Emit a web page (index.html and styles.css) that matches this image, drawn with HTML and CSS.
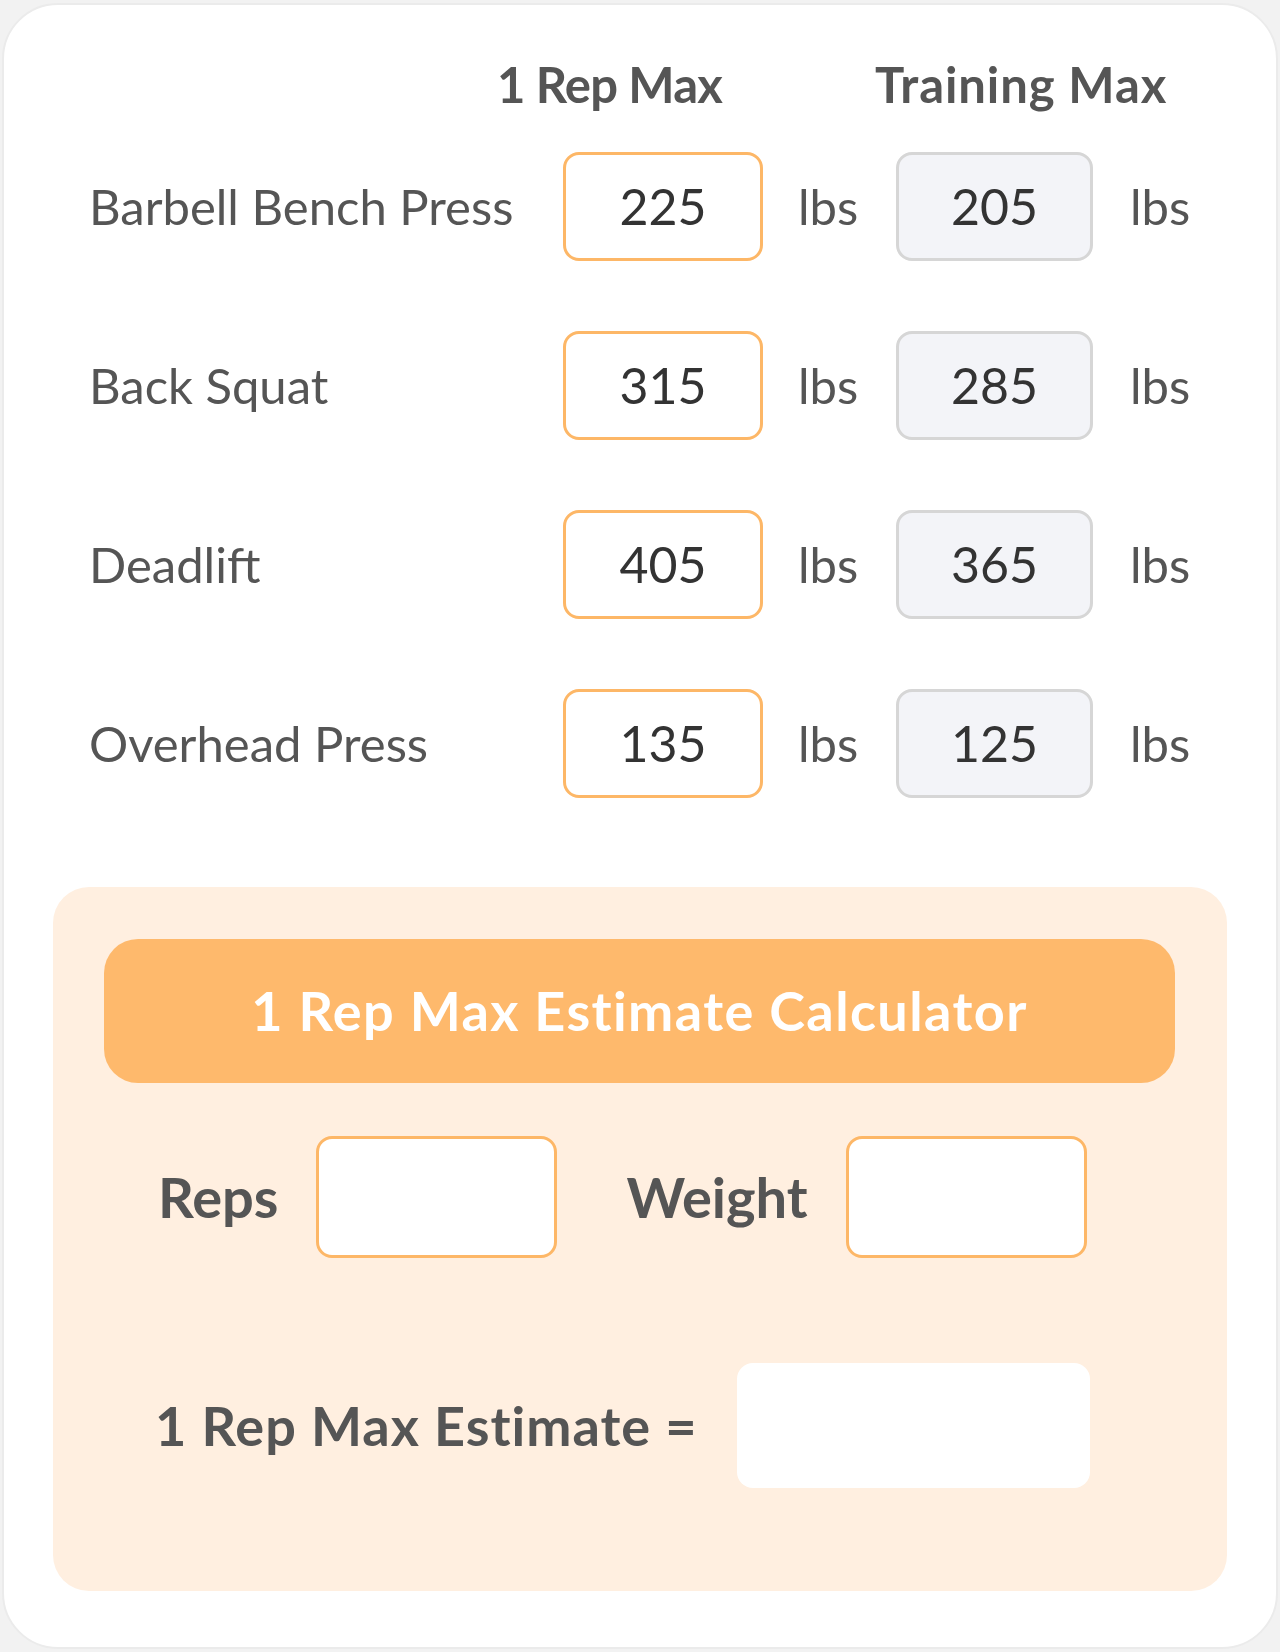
FILE: index.html
```html
<!DOCTYPE html>
<html lang="en">
<head>
    <meta charset="UTF-8">
    <meta name="viewport" content="width=device-width, initial-scale=1.0">
    <title>Training Max Calculator</title>
    <link rel="stylesheet" href="styles.css">
</head>
<body>

<div class="card">
    <div class="headings">
        <span class="heading-max">1 Rep Max</span>
        <span class="heading-training">Training Max</span>
    </div>

    <div class="lift-table">
        <div class="lift-name">Barbell Bench Press</div>
        <input class="max-input" type="text" value="225">
        <div class="unit">lbs</div>
        <input class="training-input" type="text" value="205" readonly>
        <div class="unit unit-last">lbs</div>

        <div class="lift-name">Back Squat</div>
        <input class="max-input" type="text" value="315">
        <div class="unit">lbs</div>
        <input class="training-input" type="text" value="285" readonly>
        <div class="unit unit-last">lbs</div>

        <div class="lift-name">Deadlift</div>
        <input class="max-input" type="text" value="405">
        <div class="unit">lbs</div>
        <input class="training-input" type="text" value="365" readonly>
        <div class="unit unit-last">lbs</div>

        <div class="lift-name">Overhead Press</div>
        <input class="max-input" type="text" value="135">
        <div class="unit">lbs</div>
        <input class="training-input" type="text" value="125" readonly>
        <div class="unit unit-last">lbs</div>
    </div>

    <div class="estimate-panel">
        <button class="calc-button">1 Rep Max Estimate Calculator</button>

        <div class="calc-row">
            <label class="calc-label" for="reps">Reps</label>
            <input class="calc-input" id="reps" type="text">
            <label class="calc-label weight-label" for="weight">Weight</label>
            <input class="calc-input" id="weight" type="text">
        </div>

        <div class="result-row">
            <span class="result-label">1 Rep Max Estimate =</span>
            <div class="result-box"></div>
        </div>
    </div>
</div>

</body>
</html>
```

FILE: styles.css
```css
body {
    margin: 0;
    background-color: #f2f2f2;
    font-family: Lato, "Liberation Sans", sans-serif;
    color: #555555;
}
.card {
    box-sizing: border-box;
    width: 1276px;
    height: 1646px;
    margin: 3px 2px;
    padding-top: 50px;
    background-color: #ffffff;
    border: 2px solid #ebebeb;
    border-radius: 56px;
}

/* column headings */
.headings {
    display: flex;
    padding-left: 493px;
    margin-bottom: 38px;
    font-size: 49px;
    font-weight: 700;
    line-height: 1.2;
}
.heading-max {
    width: 378px;
    letter-spacing: -0.8px;
}
.heading-training {
    letter-spacing: 0.9px;
}

/* lifts table */
.lift-table {
    display: grid;
    grid-template-columns: 474px 200px 133px 197px auto;
    align-items: center;
    row-gap: 70px;
    padding-left: 85px;
    font-size: 49px;
    line-height: 1.2;
}
.max-input,
.training-input {
    box-sizing: border-box;
    height: 109px;
    margin: 0;
    padding: 0;
    border-radius: 16px;
    font-family: Lato, "Liberation Sans", sans-serif;
    font-size: 50px;
    color: #333333;
    text-align: center;
    outline: none;
}
.max-input {
    width: 200px;
    background-color: #ffffff;
    border: 3px solid #fdb767;
}
.training-input {
    width: 197px;
    background-color: #f3f4f8;
    border: 3px solid #d6d6d6;
}
.unit {
    padding-left: 35px;
}
.unit-last {
    padding-left: 37px;
}

/* estimate calculator */
.estimate-panel {
    margin: 89px 49px 0;
    padding: 52px 52px 103px 51px;
    background-color: #ffefe0;
    border-radius: 36px;
}
.calc-button {
    display: block;
    width: 100%;
    height: 144px;
    padding: 0;
    background-color: #feb96c;
    border: none;
    border-radius: 34px;
    color: #ffffff;
    font-family: Lato, "Liberation Sans", sans-serif;
    font-size: 54px;
    font-weight: 700;
    letter-spacing: 1.4px;
    cursor: pointer;
}
.calc-row {
    display: flex;
    align-items: center;
    margin-top: 53px;
    padding-left: 54px;
}
.calc-label {
    font-size: 56px;
    font-weight: 700;
}
.weight-label {
    margin-left: 69px;
}
.calc-input {
    box-sizing: border-box;
    width: 241px;
    height: 122px;
    margin: 0 0 0 38px;
    background-color: #ffffff;
    border: 3px solid #fdb767;
    border-radius: 16px;
    font-family: Lato, "Liberation Sans", sans-serif;
    font-size: 50px;
    outline: none;
}
.result-row {
    display: flex;
    align-items: center;
    margin-top: 105px;
    padding-left: 51px;
}
.result-label {
    font-size: 54px;
    font-weight: 700;
    letter-spacing: 1px;
}
.result-box {
    width: 353px;
    height: 125px;
    margin-left: 39px;
    background-color: #ffffff;
    border-radius: 16px;
}
```
